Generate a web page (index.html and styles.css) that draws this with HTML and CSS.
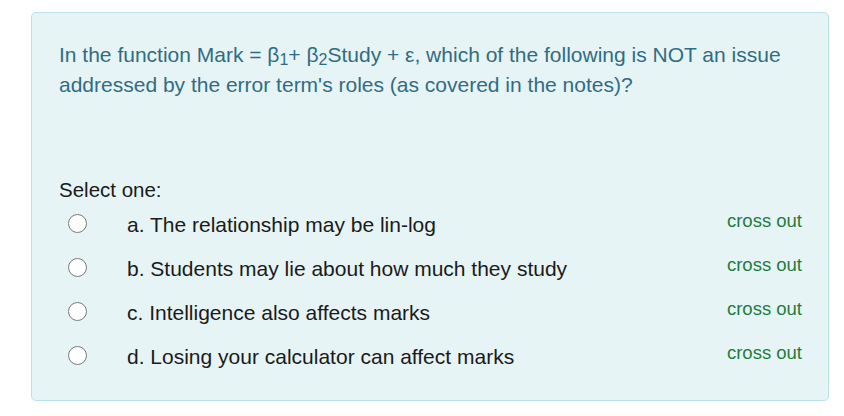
FILE: index.html
```html
<!DOCTYPE html>
<html>
<head>
<meta charset="utf-8">
<link rel="stylesheet" href="styles.css">
</head>
<body>
<div class="formulation">
  <div class="qtext">In the function Mark = β<span class="sub">1</span>+ β<span class="sub">2</span>Study + ε, which of the following is NOT an issue addressed by the error term's roles (as covered in the notes)?</div>
  <div class="prompt">Select one:</div>
  <div class="answers">
    <div class="row">
      <span class="radio"></span>
      <span class="label">a. The relationship may be lin-log</span>
      <span class="cross">cross out</span>
    </div>
    <div class="row">
      <span class="radio"></span>
      <span class="label">b. Students may lie about how much they study</span>
      <span class="cross">cross out</span>
    </div>
    <div class="row">
      <span class="radio"></span>
      <span class="label">c. Intelligence also affects marks</span>
      <span class="cross">cross out</span>
    </div>
    <div class="row">
      <span class="radio"></span>
      <span class="label">d. Losing your calculator can affect marks</span>
      <span class="cross">cross out</span>
    </div>
  </div>
</div>
</body>
</html>
```
FILE: styles.css
```css
html, body {
  margin: 0;
  padding: 0;
  background: #ffffff;
}
body {
  padding: 12px 15px 0 31px;
  font-family: "Liberation Sans", Arial, sans-serif;
}
.formulation {
  width: 798px;
  height: 389px;
  box-sizing: border-box;
  background: #e7f4f6;
  border: 1px solid #b9e1ea;
  border-radius: 5px;
  padding: 27px 24px 0 27px;
}
.qtext {
  font-size: 21px;
  line-height: 30px;
  color: #2f6c85;
}
.qtext .sub {
  font-size: 16px;
  line-height: 1;
  vertical-align: -3px;
}
.prompt {
  margin-top: 75px;
  font-size: 20.5px;
  line-height: 30px;
  color: #1a1a1a;
}
.answers {
  display: flex;
  flex-direction: column;
  gap: 14px;
  margin-top: 5px;
}
.row {
  display: flex;
  align-items: center;
  height: 30px;
  padding-left: 9px;
}
.radio {
  width: 17px;
  height: 17px;
  border: 1px solid #7a7a7a;
  border-radius: 50%;
  background: #fff;
  flex: none;
  margin-top: -3px;
}
.label {
  margin-left: 40px;
  font-size: 21px;
  line-height: 30px;
  color: #1a1a1a;
  flex: 1;
}
.cross {
  font-size: 18.5px;
  color: #1e7c3a;
  margin-top: -9px;
  margin-right: 2px;
}
```
